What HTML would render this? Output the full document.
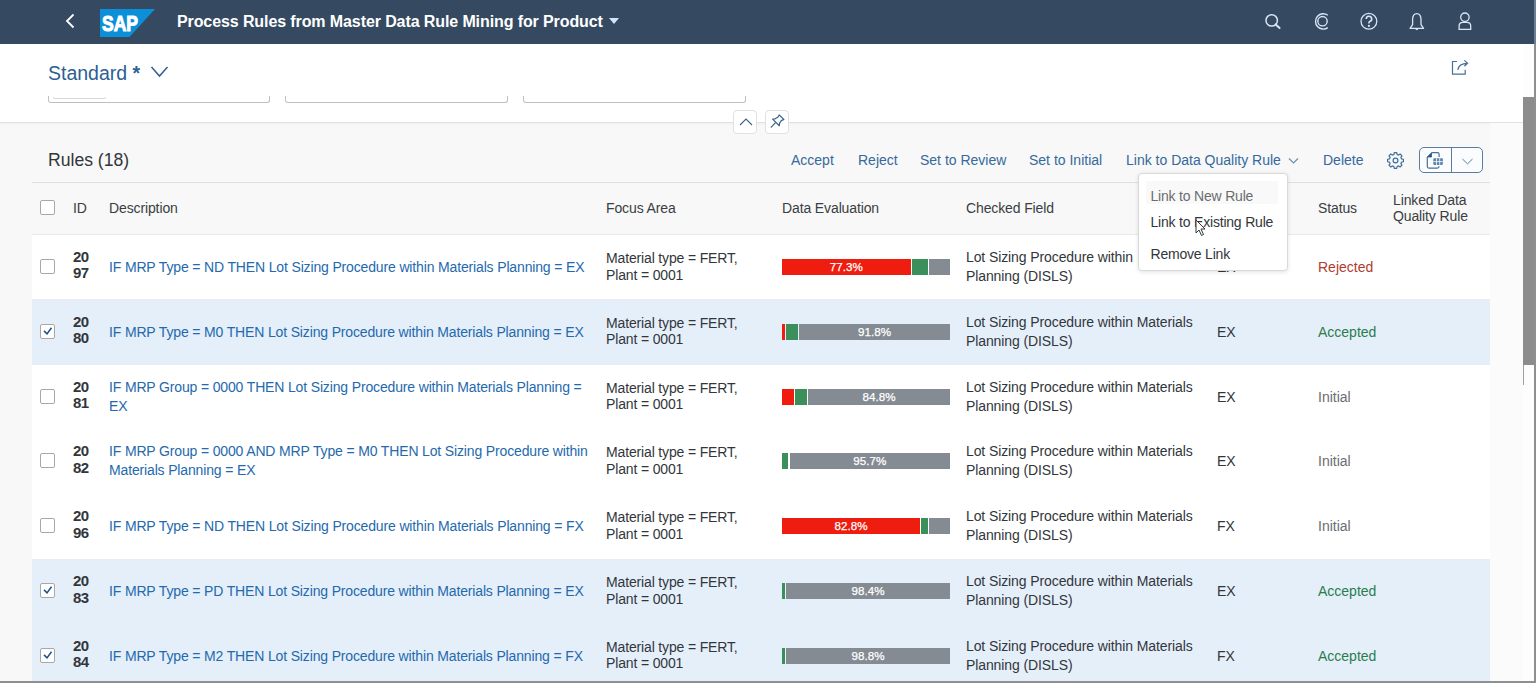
<!DOCTYPE html>
<html><head><meta charset="utf-8">
<style>
*{box-sizing:border-box;margin:0;padding:0}
html,body{width:1536px;height:683px;overflow:hidden}
body{position:relative;background:#f8f8f8;font-family:"Liberation Sans",sans-serif;color:#32363a;font-size:14px}
.abs{position:absolute}
#shell{position:absolute;left:0;top:0;width:1536px;height:44px;background:#354a61}
#title{position:absolute;left:177px;top:12px;color:#fff;font-weight:bold;font-size:16px;line-height:20px;letter-spacing:-0.1px;white-space:nowrap}
#header{position:absolute;left:0;top:44px;width:1523px;height:79px;background:#fff;border-bottom:1px solid #e2e2e2;box-shadow:0 1px 2px rgba(0,0,0,0.04)}
#variant{position:absolute;left:48px;top:61px;color:#2c5f93;font-size:19.5px;line-height:24px;white-space:nowrap}
.fld{position:absolute;top:96px;height:7px;border:1px solid #c0c0c0;border-top:none;border-radius:0 0 3px 3px}
.hbtn{position:absolute;top:110px;width:24px;height:24px;background:#fff;border:1px solid #e0e0e0;border-radius:4px}
#toolbar-title{position:absolute;left:48px;top:150px;font-size:17.6px;line-height:20px;color:#32363a;white-space:nowrap}
.tb{position:absolute;top:151px;font-size:14px;line-height:18px;color:#36699c;white-space:nowrap}
#tbline{position:absolute;left:32px;top:182px;width:1458px;height:1px;background:#e0e0e0}
.th{position:absolute;font-size:14px;line-height:16px;letter-spacing:-0.12px;color:#3a3e42;white-space:nowrap}
.row{position:absolute;left:32px;width:1458px;height:65px;background:#fff;}
.row.sel{background:#e5effa}
.row>div{position:absolute;white-space:nowrap}
.cb{left:8px;width:15px;height:15px;border:1px solid #a8a8a8;border-radius:2px;background:#fff}
.cb svg{position:absolute;left:1px;top:1px}
.hcb{position:absolute;left:40px;top:200px;width:15px;height:15px;border:1px solid #a8a8a8;border-radius:2px;background:#fff}
.idc{left:41px;top:14px;font-weight:bold;font-size:15px;line-height:16.4px;letter-spacing:-0.6px;color:#32363a}
.desc{left:77px;color:#2469ad;font-size:14px;letter-spacing:-0.15px}
.desc.one{top:23px;line-height:18px}
.desc.two{top:13px;line-height:19px}
.fa{left:574px;top:15px;font-size:14px;line-height:16.5px;letter-spacing:-0.15px}
.cf{left:934px;top:13px;font-size:14px;line-height:19px;letter-spacing:-0.1px}
.val{left:1185px;top:23px;line-height:18px}
.st{left:1286px;top:23px;line-height:18px}
.st.rej{color:#b03c2e}
.st.acc{color:#2a7d4c}
.st.ini{color:#6a6d70}
.bar{left:750px;top:24px;width:168px;height:16px}
.seg{position:absolute;top:0;height:16px;text-align:center;color:#fff;font-size:11.6px;line-height:16px;-webkit-text-stroke:0.25px #fff}
.seg.r{background:#ee1d0f}
.seg.g{background:#3a8f5b}
.seg.y{background:#848b93}
#menu{position:absolute;left:1138px;top:173px;width:150px;height:98px;background:#fff;border:1px solid #d9d9d9;border-radius:4px;box-shadow:0 1px 4px rgba(0,0,0,0.12)}
.mi{position:absolute;left:11.5px;letter-spacing:-0.2px;font-size:14px;line-height:18px;color:#32363a;white-space:nowrap}
#sbtrack{position:absolute;left:1523px;top:44px;width:11px;height:639px;background:#fdfdfd}
#rstrip{position:absolute;left:1490px;top:123px;width:33px;height:560px;background:#fbfbfb}
#sbthumb{position:absolute;left:1523px;top:97px;width:11px;height:268px;background:#8c8c8c}
#rborder{position:absolute;left:1534px;top:44px;width:2px;height:639px;background:#8f8f8f}
#rborder2{position:absolute;left:1534px;top:0;width:2px;height:44px;background:#6d7e90}
#bborder{position:absolute;left:0;top:681px;width:1536px;height:2px;background:#8f8f8f}
</style></head><body>
<div id="shell">
  <svg class="abs" style="left:64px;top:13px" width="12" height="16" viewBox="0 0 12 16"><path d="M9.5 1.5 L3 8 L9.5 14.5" fill="none" stroke="#fff" stroke-width="1.8"/></svg>
  <svg class="abs" style="left:100px;top:9px" width="55" height="28" viewBox="0 0 55 28"><path d="M0 0 H55 L29.5 28 H0 Z" fill="#0b8fd9"/>
    <text x="2" y="22.3" font-family="Liberation Sans" font-weight="bold" font-size="22" fill="#fff" stroke="#fff" stroke-width="1.1" textLength="36" lengthAdjust="spacingAndGlyphs">SAP</text></svg>
  <div id="title">Process Rules from Master Data Rule Mining for Product</div>
  <svg class="abs" style="left:608px;top:17px" width="12" height="8" viewBox="0 0 12 8"><path d="M1 1 H11 L6 7 Z" fill="#d1e6fb"/></svg>
  <!-- search -->
  <svg class="abs" style="left:1262px;top:11px" width="22" height="22" viewBox="0 0 22 22"><circle cx="9.7" cy="9.4" r="5.7" fill="none" stroke="#d6e6f6" stroke-width="1.5"/><path d="M13.7 13.4 L17.6 16.9" stroke="#d6e6f6" stroke-width="2" stroke-linecap="round"/></svg>
  <!-- copilot -->
  <svg class="abs" style="left:1310px;top:10px" width="24" height="24" viewBox="0 0 24 24"><path d="M17.8 5.2 A7.7 7.7 0 1 0 17.8 17.6" fill="none" stroke="#d6e6f6" stroke-width="1.4"/><circle cx="12.5" cy="11.2" r="4.7" fill="none" stroke="#d6e6f6" stroke-width="1.4"/></svg>
  <!-- help -->
  <svg class="abs" style="left:1357px;top:10px" width="24" height="24" viewBox="0 0 24 24"><circle cx="11.9" cy="11.3" r="7.9" fill="none" stroke="#d6e6f6" stroke-width="1.3"/><path d="M9.3 9 A2.7 2.7 0 1 1 12.7 11.5 C12.1 11.9 11.9 12.4 11.9 13.5" fill="none" stroke="#d6e6f6" stroke-width="1.6"/><circle cx="11.9" cy="15.9" r="1.1" fill="#d6e6f6"/></svg>
  <!-- bell -->
  <svg class="abs" style="left:1405px;top:10px" width="24" height="24" viewBox="0 0 24 24"><path d="M11.8 3.6 C9.2 3.6 7.6 6 7.6 9.3 V14.6 L5.1 18.4 H18.5 L16 14.6 V9.3 C16 6 14.4 3.6 11.8 3.6 Z" fill="none" stroke="#d6e6f6" stroke-width="1.3" stroke-linejoin="round"/><path d="M10.6 19.1 Q11.8 20.3 13 19.1" fill="#d6e6f6" stroke="#d6e6f6" stroke-width="1"/></svg>
  <!-- user -->
  <svg class="abs" style="left:1453px;top:10px" width="24" height="24" viewBox="0 0 24 24"><circle cx="11.9" cy="7.2" r="4.2" fill="none" stroke="#d6e6f6" stroke-width="1.3"/><path d="M6.1 19.3 V16.1 C6.1 13.9 7.9 12.4 10 12.4 H13.8 C15.9 12.4 17.7 13.9 17.7 16.1 V19.3 Z" fill="none" stroke="#d6e6f6" stroke-width="1.3"/></svg>
</div>
<div id="header">
  <svg class="abs" style="left:1450px;top:15px" width="21" height="18" viewBox="0 0 21 18"><path d="M7 2.5 H2.5 V15.1 H15.2 V10.8" fill="none" stroke="#45709a" stroke-width="1.2"/><path d="M7.8 10.8 C8.5 6.8 11.5 4.3 17.3 4.3 M14.4 1.4 L17.5 4.3 L14.4 7.2" fill="none" stroke="#45709a" stroke-width="1.2"/></svg>
</div>
<div id="variant">Standard&nbsp;<span style="font-weight:bold">*</span></div>
<svg class="abs" style="left:150px;top:64px" width="20" height="14" viewBox="0 0 20 14"><path d="M1.5 3 L9.5 12 L17.5 3" fill="none" stroke="#2c5f93" stroke-width="1.5"/></svg>
<div class="fld" style="left:48px;width:222px"></div>
<div class="abs" style="left:53px;top:97px;width:53px;height:2px;border:1px solid #d8d8d8;border-top:none;border-radius:0 0 2px 2px"></div>
<div class="fld" style="left:285px;width:223px"></div>
<div class="fld" style="left:523px;width:223px"></div>
<div class="hbtn" style="left:733px"><svg class="abs" style="left:4.5px;top:6px" width="14" height="9" viewBox="0 0 14 9"><path d="M1 8 L7 2 L13 8" fill="none" stroke="#3a6288" stroke-width="1.1"/></svg></div>
<div class="hbtn" style="left:765px"><svg class="abs" style="left:3px;top:2px" width="17" height="17" viewBox="0 0 17 17"><path d="M10.2 2 L14.9 6.4 L12.3 7.6 L10.6 10.1 L10.3 12.7 L3.6 6.1 L6.2 5.8 L8.8 4.2 Z" fill="none" stroke="#3a6288" stroke-width="1.2" stroke-linejoin="round"/><path d="M6.3 9.8 L2.2 14.2" stroke="#3a6288" stroke-width="1.2" stroke-linecap="round"/></svg></div>

<div id="toolbar-title">Rules (18)</div>
<div class="tb" style="left:791px">Accept</div>
<div class="tb" style="left:858px">Reject</div>
<div class="tb" style="left:920px">Set to Review</div>
<div class="tb" style="left:1029px">Set to Initial</div>
<div class="tb" style="left:1126px">Link to Data Quality Rule</div>
<svg class="abs" style="left:1288px;top:157px" width="11" height="8" viewBox="0 0 11 8"><path d="M1 1.5 L5.5 6 L10 1.5" fill="none" stroke="#6b8fb3" stroke-width="1.2"/></svg>
<div class="tb" style="left:1323px">Delete</div>
<svg class="abs" style="left:1385.5px;top:151px" width="19" height="19" viewBox="0 0 19 19"><path d="M7.85 3.52 L8.23 1.60 L10.77 1.60 L11.15 3.52 L12.56 4.11 L14.18 3.01 L15.99 4.82 L14.89 6.44 L15.48 7.85 L17.40 8.23 L17.40 10.77 L15.48 11.15 L14.89 12.56 L15.99 14.18 L14.18 15.99 L12.56 14.89 L11.15 15.48 L10.77 17.40 L8.23 17.40 L7.85 15.48 L6.44 14.89 L4.82 15.99 L3.01 14.18 L4.11 12.56 L3.52 11.15 L1.60 10.77 L1.60 8.23 L3.52 7.85 L4.11 6.44 L3.01 4.82 L4.82 3.01 L6.44 4.11 Z" fill="none" stroke="#3f6f9c" stroke-width="1.2" stroke-linejoin="round"/><circle cx="9.5" cy="9.5" r="2.4" fill="none" stroke="#3f6f9c" stroke-width="1.2"/></svg>
<div class="abs" style="left:1419px;top:147px;width:64px;height:26px;border:1px solid #5a7c9e;border-radius:5px;background:#fbfcfd"></div>
<div class="abs" style="left:1451px;top:148px;width:1px;height:24px;background:#5a7c9e"></div>
<svg class="abs" style="left:1424px;top:150px" width="22" height="22" viewBox="0 0 22 22"><path d="M3.3 7 V16.6 Q3.3 18.1 4.8 18.1 H13.3 Q15.1 18.1 15.1 16.3 M7.5 2.7 H13.6 Q15.1 2.7 15.1 4.2 V7" fill="none" stroke="#4a6f94" stroke-width="1.2"/><path d="M3.3 7 L7.5 2.7 V7 Z" fill="#1d5a96" stroke="#1d5a96" stroke-width="0.8"/><rect x="9.3" y="8.3" width="9.6" height="6.6" rx="0.8" fill="#5b86b0"/><path d="M9.3 11.6 H18.9 M12.5 8.3 V14.9 M15.7 8.3 V14.9" stroke="#fbfcfd" stroke-width="0.8"/></svg>
<svg class="abs" style="left:1461px;top:158px" width="12" height="8" viewBox="0 0 12 8"><path d="M1.5 1 L6.5 5.8 L11.5 1" fill="none" stroke="#5a7c9e" stroke-width="1"/></svg>
<div id="tbline"></div>
<div class="abs" style="left:32px;top:234px;width:1458px;height:1px;background:#e8e8e8"></div>

<div class="hcb"></div>
<div class="th" style="left:73px;top:200px">ID</div>
<div class="th" style="left:109px;top:200px">Description</div>
<div class="th" style="left:606px;top:200px">Focus Area</div>
<div class="th" style="left:782px;top:200px">Data Evaluation</div>
<div class="th" style="left:966px;top:200px">Checked Field</div>
<div class="th" style="left:1318px;top:200px">Status</div>
<div class="th" style="left:1393px;top:192px;line-height:16px">Linked Data<br>Quality Rule</div>

<div class="row" style="top:235.0px"><div class="cb" style="top:24px"></div><div class="idc">20<br>97</div><div class="desc one">IF MRP Type = ND THEN Lot Sizing Procedure within Materials Planning = EX</div><div class="fa">Material type = FERT,<br>Plant = 0001</div><div class="bar"><div class="seg r" style="left:0px;width:128.5px"><span>77.3%</span></div><div class="seg g" style="left:129.5px;width:16.5px"></div><div class="seg y" style="left:147px;width:21px"></div></div><div class="cf">Lot Sizing Procedure within <span style="visibility:hidden">Materials</span><br>Planning (DISLS)</div><div class="val">EX</div><div class="st rej">Rejected</div></div>
<div class="row sel" style="top:299.82px"><div class="cb" style="top:24px"><svg width="11" height="10" viewBox="0 0 11 10"><path d="M2 4.9 L5 7.9 L9.5 1.8" fill="none" stroke="#1f4f80" stroke-width="1.5"/></svg></div><div class="idc">20<br>80</div><div class="desc one">IF MRP Type = M0 THEN Lot Sizing Procedure within Materials Planning = EX</div><div class="fa">Material type = FERT,<br>Plant = 0001</div><div class="bar"><div class="seg r" style="left:0px;width:3px"></div><div class="seg g" style="left:4px;width:12px"></div><div class="seg y" style="left:17px;width:151px"><span>91.8%</span></div></div><div class="cf">Lot Sizing Procedure within Materials<br>Planning (DISLS)</div><div class="val">EX</div><div class="st acc">Accepted</div></div>
<div class="row" style="top:364.64px"><div class="cb" style="top:24px"></div><div class="idc">20<br>81</div><div class="desc two">IF MRP Group = 0000 THEN Lot Sizing Procedure within Materials Planning =<br>EX</div><div class="fa">Material type = FERT,<br>Plant = 0001</div><div class="bar"><div class="seg r" style="left:0px;width:12px"></div><div class="seg g" style="left:13px;width:12px"></div><div class="seg y" style="left:26px;width:142px"><span>84.8%</span></div></div><div class="cf">Lot Sizing Procedure within Materials<br>Planning (DISLS)</div><div class="val">EX</div><div class="st ini">Initial</div></div>
<div class="row" style="top:429.46px"><div class="cb" style="top:24px"></div><div class="idc">20<br>82</div><div class="desc two">IF MRP Group = 0000 AND MRP Type = M0 THEN Lot Sizing Procedure within<br>Materials Planning = EX</div><div class="fa">Material type = FERT,<br>Plant = 0001</div><div class="bar"><div class="seg g" style="left:0px;width:6px"></div><div class="seg y" style="left:7.5px;width:160.5px"><span>95.7%</span></div></div><div class="cf">Lot Sizing Procedure within Materials<br>Planning (DISLS)</div><div class="val">EX</div><div class="st ini">Initial</div></div>
<div class="row" style="top:494.28px"><div class="cb" style="top:24px"></div><div class="idc">20<br>96</div><div class="desc one">IF MRP Type = ND THEN Lot Sizing Procedure within Materials Planning = FX</div><div class="fa">Material type = FERT,<br>Plant = 0001</div><div class="bar"><div class="seg r" style="left:0px;width:138px"><span>82.8%</span></div><div class="seg g" style="left:139px;width:7px"></div><div class="seg y" style="left:147px;width:21px"></div></div><div class="cf">Lot Sizing Procedure within Materials<br>Planning (DISLS)</div><div class="val">FX</div><div class="st ini">Initial</div></div>
<div class="row sel" style="top:559.1px"><div class="cb" style="top:24px"><svg width="11" height="10" viewBox="0 0 11 10"><path d="M2 4.9 L5 7.9 L9.5 1.8" fill="none" stroke="#1f4f80" stroke-width="1.5"/></svg></div><div class="idc">20<br>83</div><div class="desc one">IF MRP Type = PD THEN Lot Sizing Procedure within Materials Planning = EX</div><div class="fa">Material type = FERT,<br>Plant = 0001</div><div class="bar"><div class="seg g" style="left:0px;width:3px"></div><div class="seg y" style="left:4px;width:164px"><span>98.4%</span></div></div><div class="cf">Lot Sizing Procedure within Materials<br>Planning (DISLS)</div><div class="val">EX</div><div class="st acc">Accepted</div></div>
<div class="row sel" style="top:623.92px"><div class="cb" style="top:24px"><svg width="11" height="10" viewBox="0 0 11 10"><path d="M2 4.9 L5 7.9 L9.5 1.8" fill="none" stroke="#1f4f80" stroke-width="1.5"/></svg></div><div class="idc">20<br>84</div><div class="desc one">IF MRP Type = M2 THEN Lot Sizing Procedure within Materials Planning = FX</div><div class="fa">Material type = FERT,<br>Plant = 0001</div><div class="bar"><div class="seg g" style="left:0px;width:3px"></div><div class="seg y" style="left:4px;width:164px"><span>98.8%</span></div></div><div class="cf">Lot Sizing Procedure within Materials<br>Planning (DISLS)</div><div class="val">FX</div><div class="st acc">Accepted</div></div>
<div class="abs" style="left:32px;top:299px;width:1458px;height:1px;background:#ececec"></div>
<div class="abs" style="left:32px;top:559px;width:1458px;height:1px;background:#ececec"></div>

<div id="menu">
  <div class="abs" style="left:7px;top:7px;width:132px;height:23px;background:#f9f9f9"></div>
  <div class="mi" style="top:13px;color:#6a6d70">Link to New Rule</div>
  <div class="mi" style="top:39px">Link to Existing Rule</div>
  <div class="mi" style="top:71px">Remove Link</div>
</div>
<svg class="abs" style="left:1195px;top:219px" width="12" height="18" viewBox="0 0 12 18"><path d="M1 1 V14 L4 11 L6.5 16.5 L8.5 15.5 L6 10 H10 Z" fill="#fff" stroke="#32363a" stroke-width="1"/></svg>

<div id="rstrip"></div><div id="sbtrack"></div>
<div id="sbthumb"></div>
<div class="abs" style="left:1523px;top:365px;width:1px;height:20px;background:#a0a0a0"></div><div id="rborder"></div><div id="rborder2"></div>
<div id="bborder"></div>
</body></html>
